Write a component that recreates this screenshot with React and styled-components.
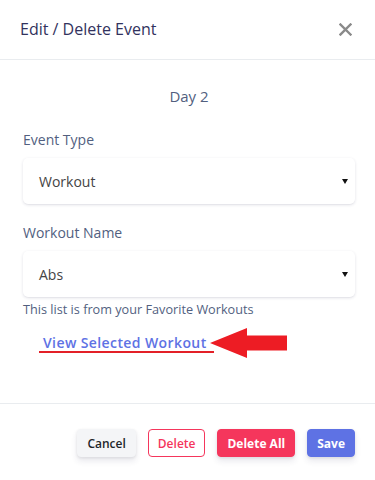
import styled, { createGlobalStyle } from "styled-components";

const GlobalStyle = createGlobalStyle`
  * { box-sizing: border-box; }
  body {
    margin: 0;
    background: #fff;
    font-family: "Open Sans", "Noto Sans", sans-serif;
  }
`;

const Modal = styled.div`
  width: 375px;
  height: 480px;
  background: #fff;
  display: flex;
  flex-direction: column;
  overflow: hidden;
`;

const Header = styled.div`
  height: 60px;
  padding: 0 20px;
  display: flex;
  align-items: center;
  justify-content: space-between;
  border-bottom: 1px solid #e9ecef;
`;

const Title = styled.h5`
  margin: 0;
  font-size: 16px;
  font-weight: 400;
  color: #32325d;
  padding-bottom: 2px;
`;

const Close = styled.button`
  border: 0;
  background: none;
  padding: 0;
  width: 16px;
  height: 16px;
  display: flex;
  align-items: center;
  justify-content: center;
  color: #8a8a8a;
  cursor: pointer;
  margin-right: 2px;
`;

const Body = styled.div`
  flex: 1;
  padding: 25px 20px 0 23px;
`;

const Day = styled.div`
  text-align: center;
  font-size: 15px;
  line-height: 22px;
  color: #525f7f;
  margin-bottom: 22px;
`;

const Label = styled.label`
  display: block;
  font-size: 14px;
  line-height: 21px;
  color: #525f7f;
  margin-top: ${({ $top }) => $top || 0}px;
  margin-bottom: 8px;
`;

const SelectBox = styled.div`
  height: 46px;
  border-radius: 5px;
  background: #fff;
  box-shadow: 0 1px 3px rgba(50, 50, 93, 0.15), 0 1px 0 rgba(0, 0, 0, 0.02);
  display: flex;
  align-items: center;
  justify-content: space-between;
  padding: 0 7px 0 16px;
  font-size: 14px;
  color: #444;
`;

const Caret = styled.span`
  width: 0;
  height: 0;
  border-left: 3px solid transparent;
  border-right: 3px solid transparent;
  border-top: 5px solid #111;
  margin-top: 1px;
`;

const Help = styled.p`
  margin: 3px 0 0;
  font-size: 12.7px;
  line-height: 19px;
  color: #525f7f;
`;

const LinkRow = styled.div`
  display: flex;
  align-items: center;
  height: 30px;
  margin-top: 9px;
  padding-left: 20px;
`;

const ViewLink = styled.a`
  position: relative;
  font-size: 14px;
  line-height: 20px;
  font-weight: 600;
  letter-spacing: 0.4px;
  color: #5e72e4;
  text-decoration: none;
  cursor: pointer;

  &::after {
    content: "";
    position: absolute;
    left: -4px;
    right: -7px;
    bottom: 0;
    height: 2px;
    background: #e32028;
  }
`;

const Arrow = styled.svg`
  margin-left: 3px;
  flex-shrink: 0;
`;

const Footer = styled.div`
  border-top: 1px solid #e9ecef;
  padding: 25px 20px 23px;
  display: flex;
  justify-content: flex-end;
  gap: 12px;
`;

const variants = {
  light: "background:#f4f5f7;color:#212529;border-color:#f4f5f7;box-shadow:0 4px 6px rgba(50,50,93,.11),0 1px 3px rgba(0,0,0,.08);",
  outline: "background:#fff;color:#f5365c;border-color:#f5365c;",
  danger: "background:#f5365c;color:#fff;border-color:#f5365c;box-shadow:0 4px 6px rgba(50,50,93,.11),0 1px 3px rgba(0,0,0,.08);",
  primary: "background:#5e72e4;color:#fff;border-color:#5e72e4;box-shadow:0 4px 6px rgba(50,50,93,.11),0 1px 3px rgba(0,0,0,.08);",
};

const Button = styled.button`
  height: 28px;
  padding: 0 9px;
  border: 1px solid transparent;
  border-radius: 4px;
  font-family: "Open Sans", "Noto Sans", sans-serif;
  font-size: 12px;
  font-weight: ${({ $weight }) => $weight || 700};
  cursor: pointer;
  ${({ $variant }) => variants[$variant]}
`;

export default function App() {
  return (
    <>
      <GlobalStyle />
      <Modal>
        <Header>
          <Title>Edit / Delete Event</Title>
          <Close aria-label="Close">
            <svg width="13" height="13" viewBox="0 0 13 13">
              <path d="M1.5 1.5L11.5 11.5M11.5 1.5L1.5 11.5" stroke="currentColor" strokeWidth="2.4" strokeLinecap="square" />
            </svg>
          </Close>
        </Header>
        <Body>
          <Day>Day 2</Day>
          <Label>Event Type</Label>
          <SelectBox>
            <span>Workout</span>
            <Caret />
          </SelectBox>
          <Label $top={18}>Workout Name</Label>
          <SelectBox>
            <span>Abs</span>
            <Caret />
          </SelectBox>
          <Help>This list is from your Favorite Workouts</Help>
          <LinkRow>
            <ViewLink>View Selected Workout</ViewLink>
            <Arrow width="77" height="30" viewBox="0 0 77 30">
              <polygon points="0,15 37,0 37,7.5 77,7.5 77,22.5 37,22.5 37,30" fill="#ed1c24" />
            </Arrow>
          </LinkRow>
        </Body>
        <Footer>
          <Button $variant="light" $weight={600}>Cancel</Button>
          <Button $variant="outline" $weight={600}>Delete</Button>
          <Button $variant="danger">Delete All</Button>
          <Button $variant="primary">Save</Button>
        </Footer>
      </Modal>
    </>
  );
}
